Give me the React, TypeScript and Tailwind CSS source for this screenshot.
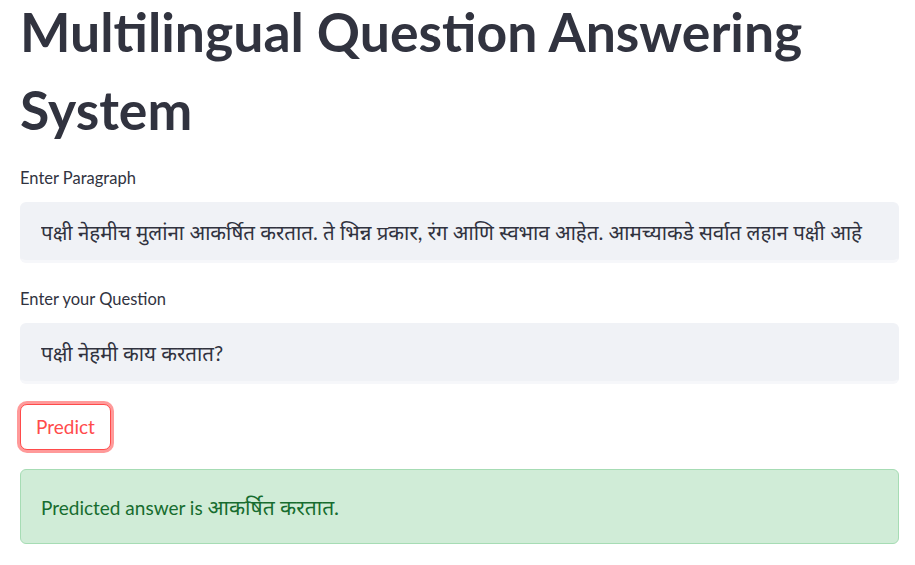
import { useState } from "react";

// component: 다국어 질의응답 화면 //
const App = () => {
    const [paragraph, setParagraph] = useState(
        "पक्षी नेहमीच मुलांना आकर्षित करतात. ते भिन्न प्रकार, रंग आणि स्वभाव आहेत. आमच्याकडे सर्वात लहान पक्षी आहे"
    );
    const [question, setQuestion] = useState("पक्षी नेहमी काय करतात?");

    const font = { fontFamily: "Lato, 'Noto Sans', 'Noto Sans Devanagari', sans-serif" };

    return (
        <div className="min-h-screen bg-white pl-5 pr-4 text-[#31333f]" style={font}>
            <h1 className="text-[53.5px] font-bold leading-[78px] -mt-[8px]">
                Multilingual Question Answering System
            </h1>

            <div className="mt-[20px]">
                <label className="block text-[16.5px] leading-[20px] mb-[14px]">Enter Paragraph</label>
                <input
                    value={paragraph}
                    onChange={(e) => setParagraph(e.target.value)}
                    className="w-full h-[61px] pl-5 pr-2 bg-[#f0f2f6] rounded-md border border-[#f0f2f6] border-b-[3px] border-b-[#f6f7fa] text-[20.5px] text-[#31333f] focus:outline-none"
                />
            </div>

            <div className="mt-[26px]">
                <label className="block text-[16.5px] leading-[20px] mb-[14px]">Enter your Question</label>
                <input
                    value={question}
                    onChange={(e) => setQuestion(e.target.value)}
                    className="w-full h-[61px] pl-5 pr-2 bg-[#f0f2f6] rounded-md border border-[#f0f2f6] border-b-[3px] border-b-[#f6f7fa] text-[20.5px] text-[#31333f] focus:outline-none"
                />
            </div>

            <button className="mt-[20px] h-[46px] px-[15px] bg-white text-[#ff4b4b] text-[19px] rounded-[7px] border border-[#ff4b4b] ring-[3px] ring-[#ff9a9a]">
                Predict
            </button>

            <div className="mt-[19px] h-[75px] flex items-center px-5 bg-[#d0ecd7] border border-[#a6dcb4] rounded-md text-[19px] text-[#176c2f]">
                <span>
                    Predicted answer is <span className="text-[21px]">आकर्षित करतात.</span>
                </span>
            </div>
        </div>
    );
};

export default App;
